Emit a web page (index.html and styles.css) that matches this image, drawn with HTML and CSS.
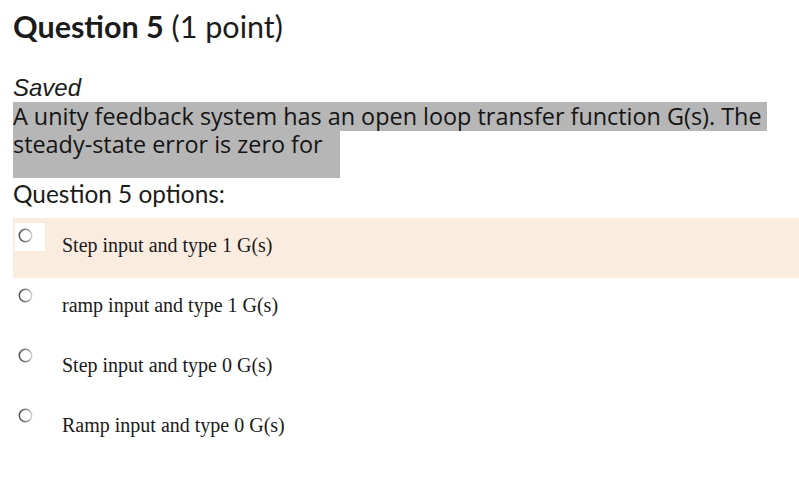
FILE: index.html
```html
<!DOCTYPE html>
<html>
<head>
<meta charset="utf-8">
<link rel="stylesheet" href="styles.css">
</head>
<body>
<div class="page">
  <h1 class="title"><span class="q-bold">Question 5</span> <span class="q-points">(1 point)</span></h1>
  <div class="saved">Saved</div>
  <div class="stem">
    <div class="stem-line stem-line1">A unity feedback system has an open loop transfer function G(s). The</div>
    <div class="stem-line stem-line2">steady-state error is zero for</div>
  </div>
  <div class="options-label">Question 5 options:</div>
  <div class="options">
    <div class="option option-hl">
      <div class="radio-cell"><span class="radio-box"><svg class="radio" width="15" height="15" viewBox="0 0 15 15"><defs><linearGradient id="g1" x1="0" y1="0" x2="1" y2="0"><stop offset="0" stop-color="#4e4e4e"/><stop offset="0.55" stop-color="#858585"/><stop offset="1" stop-color="#cfcfcf"/></linearGradient></defs><circle cx="7.5" cy="7.5" r="6.2" fill="#fff" stroke="url(#g1)" stroke-width="1.5"/></svg></span></div>
      <div class="opt-text">Step input and type 1 G(s)</div>
    </div>
    <div class="option">
      <div class="radio-cell"><svg class="radio" width="15" height="15" viewBox="0 0 15 15"><circle cx="7.5" cy="7.5" r="6.2" fill="#fff" stroke="url(#g1)" stroke-width="1.5"/></svg></div>
      <div class="opt-text">ramp input and type 1 G(s)</div>
    </div>
    <div class="option">
      <div class="radio-cell"><svg class="radio" width="15" height="15" viewBox="0 0 15 15"><circle cx="7.5" cy="7.5" r="6.2" fill="#fff" stroke="url(#g1)" stroke-width="1.5"/></svg></div>
      <div class="opt-text">Step input and type 0 G(s)</div>
    </div>
    <div class="option">
      <div class="radio-cell"><svg class="radio" width="15" height="15" viewBox="0 0 15 15"><circle cx="7.5" cy="7.5" r="6.2" fill="#fff" stroke="url(#g1)" stroke-width="1.5"/></svg></div>
      <div class="opt-text">Ramp input and type 0 G(s)</div>
    </div>
  </div>
</div>
</body>
</html>
```
FILE: styles.css
```css
* { box-sizing: border-box; }
html, body { margin: 0; padding: 0; background: #fff; }
body { color: #1a1a1a; width: 799px; height: 494px; overflow: hidden; }
.page { padding: 7px 0 0 13px; }
.title {
  margin: 0;
  font-family: Lato, sans-serif;
  font-size: 30.5px;
  line-height: 38px;
  font-weight: 400;
  color: #1b1b1b;
}
.q-bold { font-weight: 700; }
.saved {
  margin-top: 31px;
  font-family: "Liberation Sans", Arial, sans-serif;
  font-style: italic;
  font-size: 24px;
  line-height: 24px;
  color: #1b1b1b;
}
.stem {
  margin-top: 2px;
  font-family: "Open Sans", sans-serif;
  font-size: 23.4px;
  color: #141414;
}
.stem-line { background: #b6b6b6; white-space: nowrap; }
.stem-line1 { width: 754px; height: 29px; line-height: 29px; }
.stem-line2 { width: 327px; height: 47px; line-height: 27px; }
.options-label {
  margin-top: 1px;
  font-family: Lato, sans-serif;
  font-size: 24.4px;
  line-height: 30px;
  color: #1b1b1b;
}
.options { margin-top: 9px; }
.option {
  display: flex;
  height: 60px;
}
.option-hl { background: #fbece0; }
.radio-cell {
  width: 49px;
  flex: none;
  padding: 10px 0 0 5px;
}
.radio-box {
  display: block;
  width: 30px;
  height: 28px;
  background: #fff;
  margin: -5px 0 0 -3px;
  padding: 5px 0 0 3px;
}
.radio { display: block; }
.opt-text {
  font-family: "Liberation Serif", "Times New Roman", serif;
  font-size: 20px;
  line-height: 22px;
  padding-top: 16px;
  color: #1a1a1a;
}
```
